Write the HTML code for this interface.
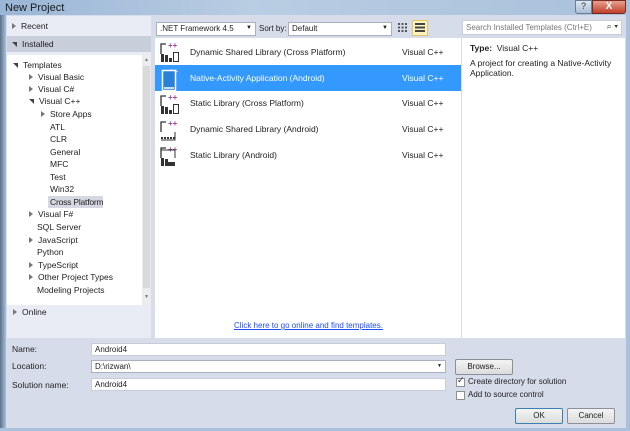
<!DOCTYPE html>
<html><head><meta charset="utf-8"><style>
*{box-sizing:border-box;margin:0;padding:0}
body{width:630px;height:431px;overflow:hidden;position:relative;font-family:"Liberation Sans",sans-serif;font-size:8.5px;color:#1e1e1e;background:#d7dceb}
.a{position:absolute;white-space:nowrap}
.t{position:absolute;white-space:nowrap;font-size:8.5px;line-height:12px}
.tri{display:inline-block;width:0;height:0;border-left:4px solid #777;border-top:3px solid transparent;border-bottom:3px solid transparent;margin-right:5px;vertical-align:0}
.tri.o{border:0;border-top:5px solid #444;border-left:5px solid transparent;margin-right:5px}
.inp{position:absolute;background:#fff;border:1px solid #c8ccd8;height:13px;padding-left:3px;line-height:11px;font-size:8px}
.btn{position:absolute;border:1px solid #8a8f9a;border-radius:2px;background:linear-gradient(#f4f4f4,#dcdcdc);text-align:center;font-size:8px}
.cb{position:absolute;width:9px;height:9px;border:1px solid #8e8f8f;background:#fff}
</style></head><body>
<div class="a" style="left:0;top:0;width:630px;height:32px;background:linear-gradient(90deg,#9ab6d6,#b9cde3 40%,#a9c1dc)"></div>
<div class="a" style="left:5px;top:2px;font-size:11px;color:#1a1a1a">New Project</div>
<div class="a" style="left:575px;top:0;width:17px;height:14px;background:linear-gradient(#dfe8f3,#aabdd5);border:1px solid #6d7d93;border-radius:0 0 0 3px;font-size:9px;text-align:center;color:#333">?</div>
<div class="a" style="left:592px;top:0;width:34px;height:14px;background:linear-gradient(#e8a08f,#c0402a);border:1px solid #7a2a20;border-radius:0 0 3px 0;font-size:10px;font-weight:bold;color:#fff;text-align:center;line-height:12px">X</div>
<div class="a" style="left:6px;top:15px;width:620px;height:416px;background:#d7dceb"></div>
<div class="a" style="left:7px;top:16px;width:144px;height:322px;background:#e9ecf5"></div>
<div class="t" style="left:12px;top:20px"><span class="tri"></span>Recent</div>
<div class="a" style="left:7px;top:36px;width:144px;height:16px;background:#c9cedb"></div>
<div class="t" style="left:12px;top:38px"><span class="tri o"></span>Installed</div>
<div class="a" style="left:7px;top:55px;width:135px;height:250px;background:#fff"></div>
<div class="a" style="left:142px;top:55px;width:9px;height:250px;background:#ececec"></div>
<div class="a" style="left:143px;top:66px;width:7px;height:222px;background:#dadada"></div>
<div class="a" style="left:144px;top:294px;font-size:5px;color:#777">▼</div>
<div class="a" style="left:144px;top:57px;font-size:5px;color:#777">▲</div>
<div class="t" style="left:13px;top:59px"><span class="tri o"></span>Templates</div>
<div class="t" style="left:29px;top:71px"><span class="tri"></span>Visual Basic</div>
<div class="t" style="left:29px;top:83px"><span class="tri"></span>Visual C#</div>
<div class="t" style="left:29px;top:95px"><span class="tri o"></span>Visual C++</div>
<div class="t" style="left:41px;top:108px"><span class="tri"></span>Store Apps</div>
<div class="t" style="left:50px;top:121px">ATL</div>
<div class="t" style="left:50px;top:133px">CLR</div>
<div class="t" style="left:50px;top:146px">General</div>
<div class="t" style="left:50px;top:158px">MFC</div>
<div class="t" style="left:50px;top:171px">Test</div>
<div class="t" style="left:50px;top:183px">Win32</div>
<div class="a" style="left:48px;top:196px;width:55px;height:12px;background:#d5d8e0"></div>
<div class="t" style="left:50px;top:196px;letter-spacing:-0.2px">Cross Platform</div>
<div class="t" style="left:29px;top:208px"><span class="tri"></span>Visual F#</div>
<div class="t" style="left:37px;top:221px">SQL Server</div>
<div class="t" style="left:29px;top:234px"><span class="tri"></span>JavaScript</div>
<div class="t" style="left:37px;top:246px">Python</div>
<div class="t" style="left:29px;top:259px"><span class="tri"></span>TypeScript</div>
<div class="t" style="left:29px;top:271px"><span class="tri"></span>Other Project Types</div>
<div class="t" style="left:37px;top:284px">Modeling Projects</div>
<div class="t" style="left:13px;top:306px"><span class="tri"></span>Online</div>
<div class="inp" style="left:156px;top:22px;width:100px;height:14px;border-color:#aab0be">.NET Framework 4.5<span style="position:absolute;right:3px;font-size:6px">▼</span></div>
<div class="a" style="left:259px;top:24px;font-size:8px">Sort by:</div>
<div class="inp" style="left:288px;top:22px;width:104px;height:14px;border-color:#aab0be">Default<span style="position:absolute;right:3px;font-size:6px">▼</span></div>
<div class="a" style="left:398px;top:23px;width:9px;height:10px;background:repeating-linear-gradient(90deg,#555 0 2px,transparent 2px 3.5px);-webkit-mask:repeating-linear-gradient(#000 0 2px,transparent 2px 3.5px)"></div>
<div class="a" style="left:412px;top:20px;width:16px;height:16px;border:1px solid #e5c365;background:#fdf4bf"></div>
<div class="a" style="left:415px;top:23px;width:10px;height:10px;background:repeating-linear-gradient(#444 0 2px,transparent 2px 3.5px)"></div>
<div class="a" style="left:155px;top:38px;width:306px;height:300px;background:#fff"></div>
<div class="a" style="left:155px;top:65px;width:306px;height:26px;background:#3399ff"></div>
<div class="t" style="left:190px;top:46px">Dynamic Shared Library (Cross Platform)</div>
<div class="t" style="left:190px;top:72px;color:#fff">Native-Activity Application (Android)</div>
<div class="t" style="left:190px;top:97px">Static Library (Cross Platform)</div>
<div class="t" style="left:190px;top:123px">Dynamic Shared Library (Android)</div>
<div class="t" style="left:190px;top:149px">Static Library (Android)</div>
<div class="t" style="left:402px;top:46px">Visual C++</div>
<div class="t" style="left:402px;top:72px;color:#fff">Visual C++</div>
<div class="t" style="left:402px;top:97px">Visual C++</div>
<div class="t" style="left:402px;top:123px">Visual C++</div>
<div class="t" style="left:402px;top:149px">Visual C++</div>
<svg class="a" style="left:158px;top:40px" width="26" height="150">
<g fill="none" stroke="#333" stroke-width="1.3"><path d="M3 14V4h5M3 66V56h5M3 92V82h5M3 118V108h5"/></g>
<g fill="#9b3fa0" font-size="8" font-family="Liberation Sans" font-weight="bold"><text x="10" y="8">++</text><text x="11" y="34" fill="#e8c8f0">++</text><text x="10" y="60">++</text><text x="10" y="86">++</text><text x="10" y="112">++</text></g>
<g fill="#333"><rect x="3" y="14" width="3" height="8"/><rect x="7" y="15" width="3" height="7"/><rect x="11" y="18" width="3" height="4"/><rect x="3" y="66" width="3" height="8"/><rect x="7" y="67" width="3" height="7"/><rect x="11" y="70" width="3" height="4"/><rect x="3" y="118" width="3" height="8"/><rect x="7" y="119" width="3" height="7"/><rect x="9" y="122" width="8" height="4"/></g>
<g fill="none" stroke="#333"><rect x="15.5" y="12.5" width="5" height="9"/><rect x="15.5" y="64.5" width="5" height="9"/><path d="M17 92v8H3M3 118v-8h14v8"/></g>
<rect x="4.5" y="30.5" width="13" height="20" fill="#2a7fd8" stroke="#fff" stroke-width="1.5"/>
<path d="M6 48h10" stroke="#fff" stroke-width="1.5"/>
<path d="M3 98h14" stroke="#333" stroke-width="2" stroke-dasharray="2 1"/>
</svg>
<div class="a" style="left:234px;top:321px;color:#1f4dff;text-decoration:underline;font-size:8px">Click here to go online and find templates.</div>
<div class="a" style="left:462px;top:20px;width:160px;height:15px;background:#fff;border:1px solid #c9cdd8;color:#777;font-size:8px;padding:2px 0 0 3px">Search Installed Templates (Ctrl+E)<span style="position:absolute;right:3px;top:0;color:#333;font-size:9px">⌕ ▾</span></div>
<div class="a" style="left:462px;top:38px;width:163px;height:300px;background:#fff"></div>
<div class="t" style="left:470px;top:42px"><b>Type:</b>&nbsp; Visual C++</div>
<div class="a" style="left:470px;top:58px;font-size:8.5px;line-height:10px;white-space:normal;width:150px">A project for creating a Native-Activity Application.</div>
<div class="t" style="left:12px;top:343px">Name:</div>
<div class="inp" style="left:91px;top:343px;width:355px">Android4</div>
<div class="t" style="left:12px;top:360px">Location:</div>
<div class="inp" style="left:91px;top:360px;width:355px;border-color:#aab0be">D:\rizwan\<span style="position:absolute;right:3px;font-size:5px">▼</span></div>
<div class="t" style="left:12px;top:379px">Solution name:</div>
<div class="inp" style="left:91px;top:378px;width:355px">Android4</div>
<div class="btn" style="left:455px;top:359px;width:58px;height:16px;line-height:14px">Browse...</div>
<div class="cb" style="left:456px;top:378px"></div><div class="a" style="left:457px;top:375px;font-size:9px">✓</div>
<div class="t" style="left:468px;top:376px;font-size:8px">Create directory for solution</div>
<div class="cb" style="left:456px;top:391px"></div>
<div class="t" style="left:468px;top:389px;font-size:8px">Add to source control</div>
<div class="btn" style="left:515px;top:408px;width:48px;height:16px;line-height:14px;border-color:#3c7fb1">OK</div>
<div class="btn" style="left:567px;top:408px;width:48px;height:16px;line-height:14px">Cancel</div>
<div class="a" style="left:626px;top:15px;width:4px;height:416px;background:#a9c1dc"></div>
<div class="a" style="left:0;top:15px;width:6px;height:416px;background:linear-gradient(90deg,#5e7088,#a9c1dc)"></div>
<div class="a" style="left:0;top:428px;width:630px;height:3px;background:#a9c1dc"></div>
</body></html>
